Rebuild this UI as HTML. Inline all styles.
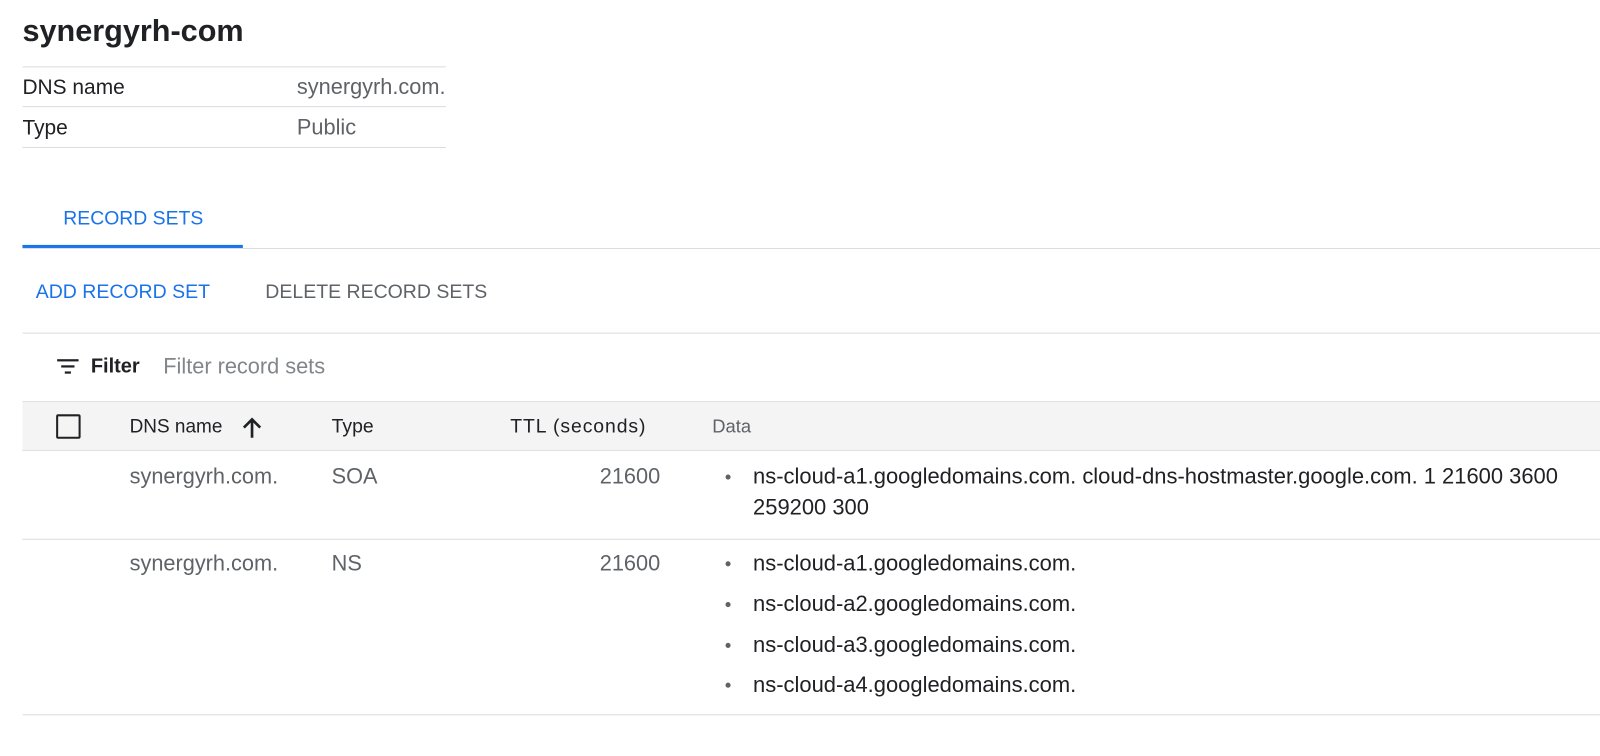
<!DOCTYPE html>
<html><head><meta charset="utf-8"><style>
body{margin:0;width:1600px;height:756px;background:#fff;font-family:"Liberation Sans",Arial,sans-serif;color:#202124;overflow:hidden}
#w{position:absolute;left:0;top:0;width:1568px;height:741px;transform:scale(1.0204);transform-origin:0 0}
.a{position:absolute;white-space:nowrap;line-height:1}
.h{position:absolute;height:1px;background:#dadce0}
.g{color:#5f6368}
.d{position:absolute;width:5px;height:5px;border-radius:50%;background:#5f6368}
.b{font-size:21.3px}
</style></head><body><div id="w">
<div class="a" style="left:22px;top:16px;font-size:30px;font-weight:bold;color:#202124">synergyrh-com</div>
<div class="h" style="left:22px;top:65px;width:415px"></div>
<div class="a" style="left:22px;top:76px;font-size:20.5px">DNS name</div>
<div class="a g b" style="left:291px;top:75px">synergyrh.com.</div>
<div class="h" style="left:22px;top:104px;width:415px"></div>
<div class="a" style="left:22px;top:116px;font-size:20.5px">Type</div>
<div class="a g b" style="left:291px;top:115px">Public</div>
<div class="h" style="left:22px;top:144px;width:415px"></div>

<div class="a" style="left:62px;top:205px;font-size:19px;color:#1a73e8">RECORD SETS</div>
<div class="h" style="left:22px;top:243px;width:1546px"></div>
<div style="position:absolute;left:22px;top:240px;width:216px;height:3px;background:#1a73e8"></div>

<div class="a" style="left:35px;top:277px;font-size:19.1px;color:#1a73e8">ADD RECORD SET</div>
<div class="a g" style="left:260px;top:277px;font-size:19.1px">DELETE RECORD SETS</div>
<div class="h" style="left:22px;top:326px;width:1546px"></div>

<svg style="position:absolute;left:55px;top:350px" width="24" height="18"><rect x="1" y="2" width="21" height="2.2" fill="#202124"/><rect x="5" y="8" width="13" height="2.2" fill="#202124"/><rect x="8.5" y="14" width="6" height="2.2" fill="#202124"/></svg>
<div class="a" style="left:89px;top:350px;font-size:19.6px;font-weight:bold">Filter</div>
<div class="a b" style="left:160px;top:349px;color:#80868b">Filter record sets</div>

<div style="position:absolute;left:22px;top:393px;width:1546px;height:47px;background:#f4f4f4;border-top:1px solid #e0e0e0;border-bottom:1px solid #e0e0e0"></div>
<div style="position:absolute;left:55px;top:406px;width:20px;height:20px;border:2.5px solid #202124;border-radius:2px"></div>
<div class="a" style="left:127px;top:409px;font-size:18.6px">DNS name</div>
<svg style="position:absolute;left:236px;top:407px" width="22" height="24"><path d="M11 22V4M3 12l8-8 8 8" stroke="#202124" stroke-width="2.6" fill="none"/></svg>
<div class="a" style="left:325px;top:409px;font-size:19px">Type</div>
<div class="a" style="left:500px;top:409px;font-size:19px;letter-spacing:0.9px">TTL (seconds)</div>
<div class="a g" style="left:698px;top:409px;font-size:18px">Data</div>

<div class="a g b" style="left:127px;top:457px">synergyrh.com.</div>
<div class="a g b" style="left:325px;top:457px">SOA</div>
<div class="a g b" style="left:647px;top:457px;transform:translateX(-100%)">21600</div>
<div class="d" style="left:711px;top:465px"></div>
<div class="a" style="left:738px;top:457px;font-size:21.5px">ns-cloud-a1.googledomains.com. cloud-dns-hostmaster.google.com. 1 21600 3600</div>
<div class="a" style="left:738px;top:487px;font-size:21.5px">259200 300</div>
<div class="h" style="left:22px;top:528px;width:1546px"></div>

<div class="a g b" style="left:127px;top:542px">synergyrh.com.</div>
<div class="a g b" style="left:325px;top:542px">NS</div>
<div class="a g b" style="left:647px;top:542px;transform:translateX(-100%)">21600</div>
<div class="d" style="left:711px;top:550px"></div>
<div class="a" style="left:738px;top:542px;font-size:21.5px">ns-cloud-a1.googledomains.com.</div>
<div class="d" style="left:711px;top:590px"></div>
<div class="a" style="left:738px;top:582px;font-size:21.5px">ns-cloud-a2.googledomains.com.</div>
<div class="d" style="left:711px;top:630px"></div>
<div class="a" style="left:738px;top:622px;font-size:21.5px">ns-cloud-a3.googledomains.com.</div>
<div class="d" style="left:711px;top:669px"></div>
<div class="a" style="left:738px;top:661px;font-size:21.5px">ns-cloud-a4.googledomains.com.</div>
<div class="h" style="left:22px;top:700px;width:1546px"></div>
</div></body></html>
